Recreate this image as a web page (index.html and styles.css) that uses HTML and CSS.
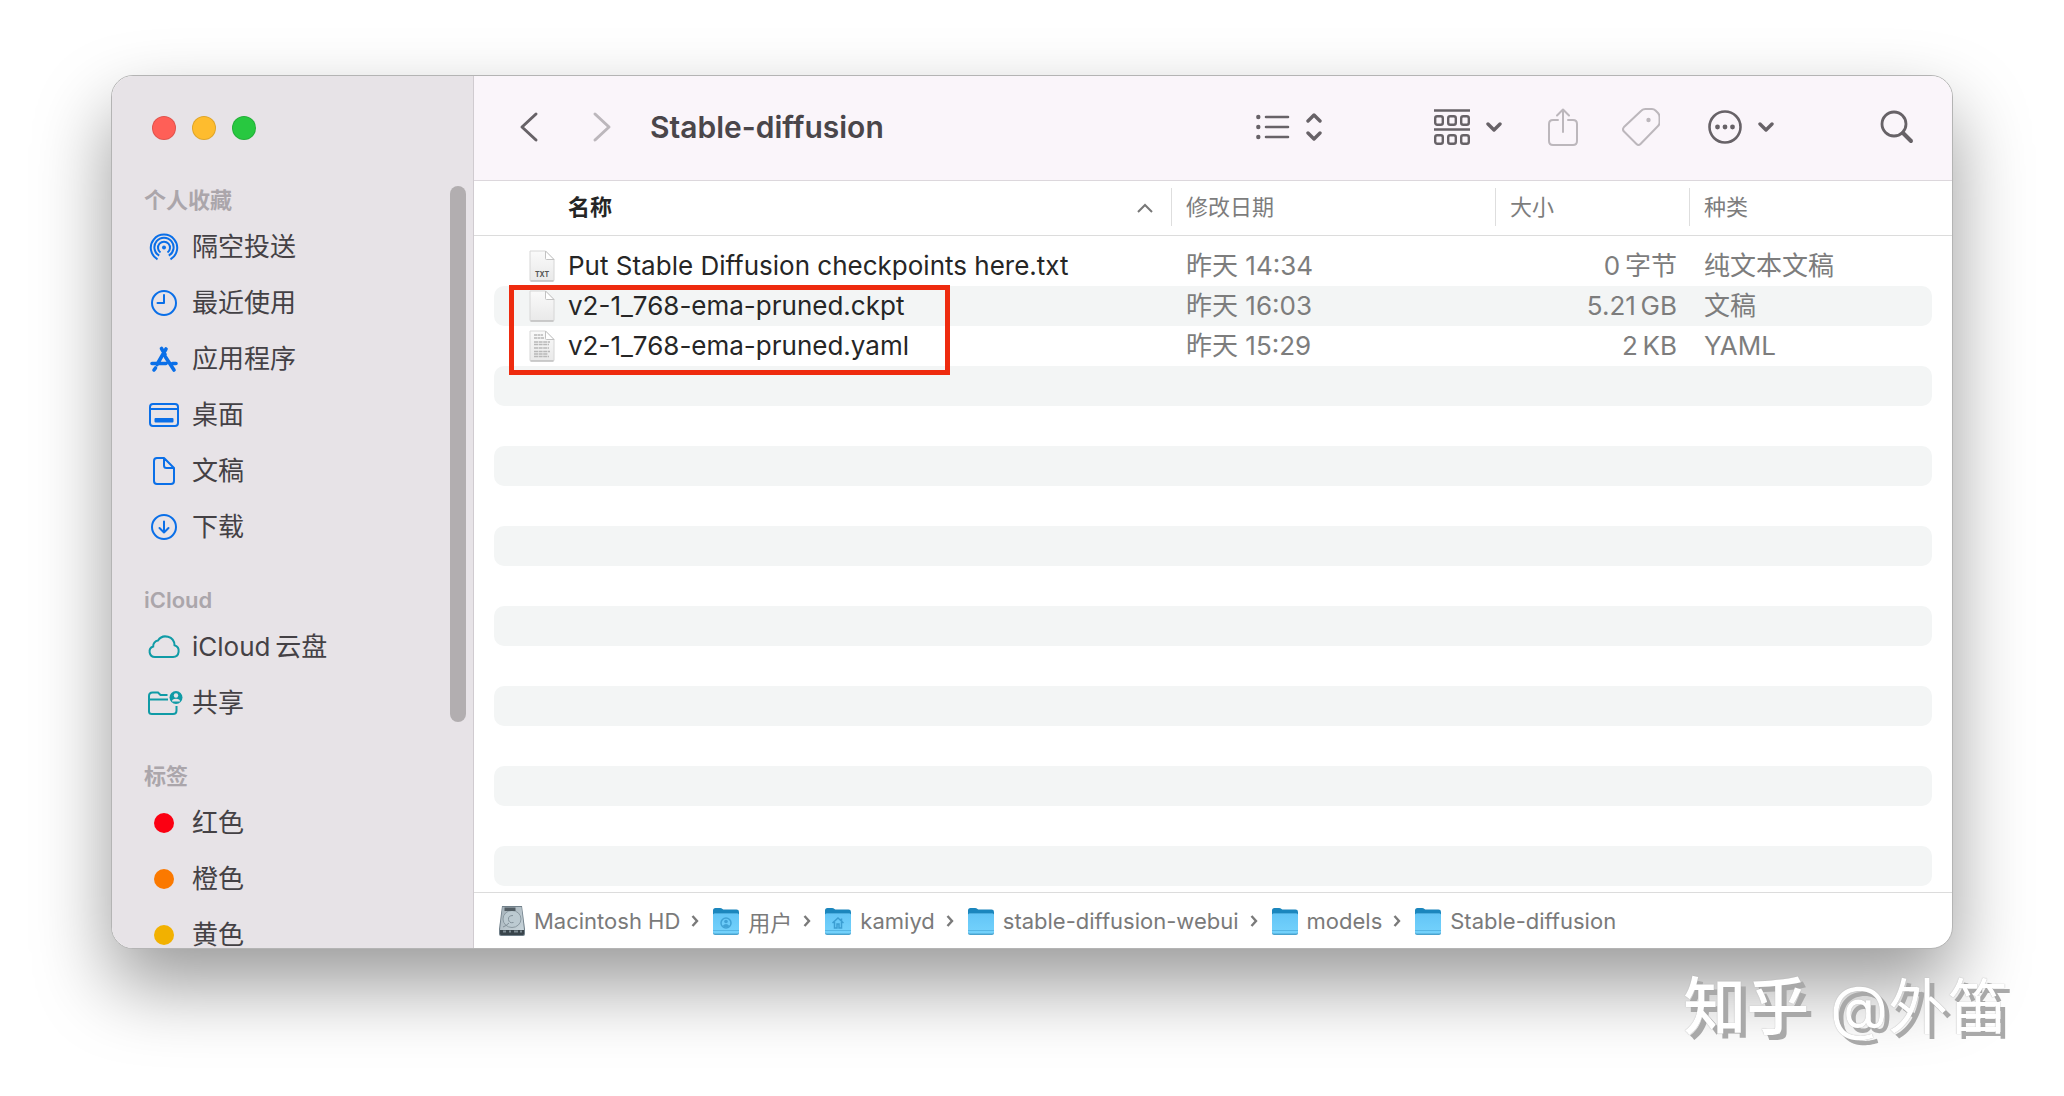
FILE: index.html
```html
<!DOCTYPE html>
<html lang="zh-CN">
<head>
  <meta charset="UTF-8">
  <meta name="viewport" content="width=device-width, initial-scale=1.0">
  <title>Stable-diffusion</title>
  <link rel="stylesheet" href="styles.css">
</head>
<body>

  <!-- shared shapes -->
  <svg class="defs" aria-hidden="true">
    <defs>
      <linearGradient id="paper" x1="0" y1="0" x2="0" y2="1">
        <stop offset="0" stop-color="#fafafa"/>
        <stop offset="1" stop-color="#e9e9e9"/>
      </linearGradient>
      <linearGradient id="blue" x1="0" y1="0" x2="0" y2="1">
        <stop offset="0" stop-color="#63c5f6"/>
        <stop offset="1" stop-color="#74d2fc"/>
      </linearGradient>
      <linearGradient id="metal" x1="0" y1="0" x2="1" y2="1">
        <stop offset="0" stop-color="#a3b0b8"/>
        <stop offset="1" stop-color="#c9d5db"/>
      </linearGradient>
      <symbol id="folder" viewBox="0 0 26 28">
        <path d="M0 3.500Q0 1 2.500 1H7q1.500 0 2.500 1l.8.600H23.500Q26 2.600 26 5v10H0z" fill="#1b86bd"/>
        <path d="M0 8q0-1.500 1.500-1.500h23Q26 6.500 26 8v18q0 2-2 2H2q-2 0-2-2z" fill="#4aa3cf"/>
        <path d="M0 8q0-1.500 1.500-1.500h23Q26 6.500 26 8v17q0 1.500-2 1.500H2q-2 0-2-1.500z" fill="url(#blue)"/>
        <path d="M0 23.500h26" stroke="#56b6e4" stroke-width="1"/>
      </symbol>
      <symbol id="down" viewBox="0 0 16 10">
        <path d="M2 2l6 6 6-6" fill="none" stroke="currentColor" stroke-width="3.400" stroke-linecap="round" stroke-linejoin="round"/>
      </symbol>
      <symbol id="next" viewBox="0 0 8 14">
        <path d="M1.500 2l4.500 5-4.500 5" fill="none" stroke="currentColor" stroke-width="2.400"/>
      </symbol>
      <symbol id="page" viewBox="0 0 26 32">
        <path d="M1 1h15.500L25 9.500V30q0 1-1 1H2q-1 0-1-1z" fill="url(#paper)" stroke="#d6d6d6"/>
        <path d="M1.500 31H24.500" stroke="#b0b0b0"/>
        <path d="M16.500 1v7.500q0 1 1 1H25z" fill="#fff" stroke="#c2c2c2"/>
      </symbol>
    </defs>
  </svg>

  <div class="window">
    <nav class="sidebar">
      <div class="lights">
        <button class="light close" aria-label="关闭"></button>
        <button class="light minimize" aria-label="最小化"></button>
        <button class="light zoom" aria-label="缩放"></button>
      </div>
      <div class="places">
        <h2>个人收藏</h2>
        <ul>
          <li><a href="#"><svg class="icon" viewBox="0 0 32 32"><g fill="none" stroke="currentColor" stroke-width="2"><path d="M9.500 28.300A13.200 13.200 0 1 1 22.500 28.300"/><path d="M11.200 24.600A9.600 9.600 0 1 1 20.800 24.600"/><path d="M12.500 21.500A6 6 0 1 1 19.500 21.500" /></g><circle cx="16" cy="16.500" r="2" fill="currentColor"/></svg>隔空投送</a></li>
          <li><a href="#"><svg class="icon" viewBox="0 0 32 32"><g fill="none" stroke="currentColor" stroke-width="2" stroke-linecap="round" stroke-linejoin="round"><circle cx="16" cy="16" r="12"/><path d="M16 8v8H9.500"/></g></svg>最近使用</a></li>
          <li><a href="#"><svg class="icon" viewBox="0 0 32 32"><g fill="none" stroke="currentColor" stroke-width="3.600" stroke-linecap="round"><path d="M18 6L9 21.500M13.500 5.500l3.500 6M17.500 14l8.500 13M4 20.500h14M24.500 20.500h3.500M7.500 25l-1.500 2"/></g></svg>应用程序</a></li>
          <li><a href="#"><svg class="icon" viewBox="0 0 32 32"><rect x="2" y="5" width="28" height="22" rx="3" fill="none" stroke="currentColor" stroke-width="2"/><path d="M2 10h28" stroke="currentColor" stroke-width="2"/><rect x="6.500" y="19" width="19" height="4.500" rx="1" fill="currentColor"/></svg>桌面</a></li>
          <li><a href="#"><svg class="icon" viewBox="0 0 32 32"><path d="M8.500 3H16l10 10v13q0 3-3 3H9q-3 0-3-3V6q0-3 3-3zM16 3v7.500q0 2.500 2.500 2.500H26" fill="none" stroke="currentColor" stroke-width="2" stroke-linejoin="round"/></svg>文稿</a></li>
          <li><a href="#"><svg class="icon" viewBox="0 0 32 32"><g fill="none" stroke="currentColor" stroke-width="2" stroke-linecap="round" stroke-linejoin="round"><circle cx="16" cy="16" r="12"/><path d="M16 10.500v11M11.500 17l4.500 4.500 4.500-4.500"/></g></svg>下载</a></li>
        </ul>
        <h2>iCloud</h2>
        <ul class="cloud">
          <li><a href="#"><svg class="icon" viewBox="0 0 32 32"><path d="M7 26H25a6 6 0 0 0 1.500-11.700A9 9 0 0 0 10 9.500a5.500 5.500 0 0 0-4.800 6A5.400 5.400 0 0 0 7 26z" fill="none" stroke="currentColor" stroke-width="2"/></svg>iCloud&thinsp;云盘</a></li>
          <li><a href="#"><svg class="icon" viewBox="0 0 32 32"><path d="M19.500 8H12.500L10 5.500H4.500Q1 5.500 1 9v15.500Q1 27 4 27h21q3.500 0 3.500-3.500V19M1 12.500h19" fill="none" stroke="currentColor" stroke-width="2"/><circle cx="28" cy="10.500" r="6.500" fill="currentColor"/><circle cx="28" cy="8.500" r="2.200" fill="#e7e3e7"/><path d="M24 14.500q0-2.700 4-2.700t4 2.700z" fill="#e7e3e7"/></svg>共享</a></li>
        </ul>
        <h2>标签</h2>
        <ul>
          <li><a href="#"><span class="dot red"></span>红色</a></li>
          <li><a href="#"><span class="dot orange"></span>橙色</a></li>
          <li><a href="#"><span class="dot yellow"></span>黄色</a></li>
        </ul>
      </div>
      <div class="scrollbar"></div>
    </nav>

    <main class="content">
      <header class="toolbar">
        <button class="tool" aria-label="后退"><svg width="20" height="32" viewBox="0 0 20 32"><path d="M17 3L3 16l14 13" fill="none" stroke="currentColor" stroke-width="3" stroke-linecap="round" stroke-linejoin="round"/></svg></button>
        <button class="tool forward" aria-label="前进" disabled><svg width="20" height="32" viewBox="0 0 20 32"><path d="M3 3l14 13L3 29" fill="none" stroke="currentColor" stroke-width="3" stroke-linecap="round" stroke-linejoin="round"/></svg></button>
        <h1>Stable-diffusion</h1>
        <div class="tools">
          <button class="tool view" aria-label="显示方式">
            <svg width="34" height="28" viewBox="0 0 34 28"><g stroke="currentColor" stroke-width="2.600" stroke-linecap="round"><path d="M10 4h22M10 14h22M10 24h22"/></g><g fill="currentColor"><circle cx="2.300" cy="4" r="2.200"/><circle cx="2.300" cy="14" r="2.200"/><circle cx="2.300" cy="24" r="2.200"/></g></svg>
            <svg width="16" height="28" viewBox="0 0 16 28"><path d="M2 8l6-6 6 6M2 20l6 6 6-6" fill="none" stroke="currentColor" stroke-width="3.400" stroke-linecap="round" stroke-linejoin="round"/></svg>
          </button>
          <button class="tool group" aria-label="分组">
            <svg width="36" height="36" viewBox="0 0 36 36"><g fill="none" stroke="currentColor" stroke-width="2.400"><path d="M0 1.500h36M0 20.500h36"/><rect x="1.200" y="7.200" width="7.600" height="8.600" rx="2"/><rect x="14.200" y="7.200" width="7.600" height="8.600" rx="2"/><rect x="27.200" y="7.200" width="7.600" height="8.600" rx="2"/><rect x="1.200" y="26.200" width="7.600" height="8.600" rx="2"/><rect x="14.200" y="26.200" width="7.600" height="8.600" rx="2"/><rect x="27.200" y="26.200" width="7.600" height="8.600" rx="2"/></g></svg>
            <svg width="16" height="10"><use href="#down"/></svg>
          </button>
          <button class="tool share" aria-label="共享" disabled><svg width="30" height="40" viewBox="0 0 30 40"><path d="M10 13H5q-4 0-4 4v17q0 4 4 4h20q4 0 4-4V17q0-4-4-4h-5M15 25V3M9 8.500L15 2.500l6 6" fill="none" stroke="currentColor" stroke-width="2" stroke-linecap="round" stroke-linejoin="round"/></svg></button>
          <button class="tool tag" aria-label="标签" disabled><svg width="38" height="38" viewBox="0 0 38 38"><path d="M19.500 2.500Q21 1 23.500 1H30q2 0 3.500 1.500L36 5q1.500 1.500 1.500 4v5.500q0 2-1.500 3.500L18.500 36q-2 2-4 0L2 23.500q-2-2 0-4.500z" fill="none" stroke="currentColor" stroke-width="2"/><circle cx="26.500" cy="12" r="2.200" fill="currentColor"/></svg></button>
          <button class="tool more" aria-label="更多">
            <svg width="34" height="34" viewBox="0 0 34 34"><circle cx="17" cy="17" r="15.500" fill="none" stroke="currentColor" stroke-width="2.600"/><g fill="currentColor"><circle cx="9.500" cy="17" r="2.400"/><circle cx="17" cy="17" r="2.400"/><circle cx="24.500" cy="17" r="2.400"/></g></svg>
            <svg width="16" height="10"><use href="#down"/></svg>
          </button>
          <button class="tool search" aria-label="搜索"><svg width="34" height="34" viewBox="0 0 34 34"><circle cx="14" cy="14" r="12" fill="none" stroke="currentColor" stroke-width="2.800"/><path d="M23 23l8 8" stroke="currentColor" stroke-width="4" stroke-linecap="round"/></svg></button>
        </div>
      </header>

      <div class="list">
        <table>
          <thead>
            <tr>
              <th class="name"><div class="sort">名称<svg width="16" height="10" viewBox="0 0 16 10"><path d="M1 9l7-7 7 7" fill="none" stroke="#777" stroke-width="2"/></svg></div></th>
              <th class="date">修改日期</th>
              <th class="size">大小</th>
              <th class="kind">种类</th>
            </tr>
          </thead>
          <tbody>
            <tr>
              <td><div class="file"><svg width="26" height="32" viewBox="0 0 26 32"><use href="#page"/><text x="13" y="27" class="ext">TXT</text></svg>Put Stable Diffusion checkpoints here.txt</div></td>
              <td>昨天 14:34</td>
              <td class="bytes">0&thinsp;字节</td>
              <td>纯文本文稿</td>
            </tr>
            <tr>
              <td><div class="file"><svg width="26" height="32" viewBox="0 0 26 32"><use href="#page"/></svg>v2-1_768-ema-pruned.ckpt</div></td>
              <td>昨天 16:03</td>
              <td class="bytes">5.21&thinsp;GB</td>
              <td>文稿</td>
            </tr>
            <tr>
              <td><div class="file"><svg width="26" height="32" viewBox="0 0 26 32"><use href="#page"/><g stroke="#b8b8b8" stroke-width="1.500"><path d="M5 5h9M5 8h10" stroke-dasharray="3 .5"/><path d="M5 12h16M5 14.500h15M5 18h15M5 21.500h16M5 24h14M5 26.500h15" stroke-dasharray="4 .6"/></g></svg>v2-1_768-ema-pruned.yaml</div></td>
              <td>昨天 15:29</td>
              <td class="bytes">2&thinsp;KB</td>
              <td>YAML</td>
            </tr>
            <tr><td colspan="4"></td></tr>
            <tr><td colspan="4"></td></tr>
            <tr><td colspan="4"></td></tr>
            <tr><td colspan="4"></td></tr>
            <tr><td colspan="4"></td></tr>
            <tr><td colspan="4"></td></tr>
            <tr><td colspan="4"></td></tr>
            <tr><td colspan="4"></td></tr>
            <tr><td colspan="4"></td></tr>
            <tr><td colspan="4"></td></tr>
            <tr><td colspan="4"></td></tr>
            <tr><td colspan="4"></td></tr>
            <tr><td colspan="4"></td></tr>
          </tbody>
        </table>
        <div class="highlight"></div>
      </div>

      <footer class="pathbar">
        <a href="#"><svg width="26" height="30" viewBox="0 0 26 30"><path d="M3 0h20l3 23v5q0 2-2 2H2q-2 0-2-2v-5z" fill="#71808a"/><path d="M3.500 1h19L25 24H1z" fill="url(#metal)"/><ellipse cx="13" cy="13" rx="9" ry="8.500" fill="#bccad1" stroke="#8c9aa2"/><path d="M14 9.500q-5 0-4.500 4t5 3M10 17q-3 3-6 4" fill="none" stroke="#83919a"/><path d="M5.500 1.500h11v3.500h-11z" fill="#525d64"/><path d="M1 24h24v3.500q0 1.500-1.500 1.500h-21Q1 29 1 27.500z" fill="#39444b"/><path d="M4 25.500h3M10 25.500h2M15 25.500h4M21 25.500h2" stroke="#7d8a92" stroke-width="2"/></svg>Macintosh HD</a>
        <svg class="next" width="8" height="14"><use href="#next"/></svg>
        <a href="#"><svg width="26" height="28" viewBox="0 0 26 28"><use href="#folder"/><g opacity=".7"><circle cx="13" cy="16" r="5" fill="none" stroke="#2f92c8" stroke-width="1.500"/><circle cx="13" cy="14.500" r="1.800" fill="#2f92c8"/><path d="M9.500 19q3.500-4 7 0-3.500 3-7 0z" fill="#2f92c8"/></g></svg>用户</a>
        <svg class="next" width="8" height="14"><use href="#next"/></svg>
        <a href="#"><svg width="26" height="28" viewBox="0 0 26 28"><use href="#folder"/><path d="M7.500 16L13 11l5.500 5M16.500 11.500v3M9.500 15v6H12v-4h2v4h2.500v-6" fill="none" stroke="#2f92c8" stroke-width="1.500" opacity=".8"/></svg>kamiyd</a>
        <svg class="next" width="8" height="14"><use href="#next"/></svg>
        <a href="#"><svg width="26" height="28"><use href="#folder"/></svg>stable-diffusion-webui</a>
        <svg class="next" width="8" height="14"><use href="#next"/></svg>
        <a href="#"><svg width="26" height="28"><use href="#folder"/></svg>models</a>
        <svg class="next" width="8" height="14"><use href="#next"/></svg>
        <a href="#"><svg width="26" height="28"><use href="#folder"/></svg>Stable-diffusion</a>
      </footer>
    </main>
  </div>

  <div class="watermark"><b>知乎</b> @外笛</div>

</body>
</html>
```

FILE: styles.css
```css
* {
  box-sizing: border-box;
}
body {
  margin: 0;
  height: 100vh;
  padding: 75px 111px 147px;
  background: #fff;
  font-family: Inter, "Noto Sans CJK SC", sans-serif;
  font-size: 26px;
  color: #262626;
  overflow: hidden;
}
h1, h2, ul {
  margin: 0;
  padding: 0;
}
a {
  color: inherit;
  text-decoration: none;
}
button {
  border: none;
  padding: 0;
  background: none;
}
svg {
  flex: none;
}
.defs {
  position: absolute;
  width: 0;
  height: 0;
}
.window {
  display: flex;
  height: 100%;
  border: 1px solid #b4b4b4;
  border-radius: 22px;
  overflow: hidden;
  background: #fff;
  box-shadow: 0 36px 76px rgba(0, 0, 0, 0.4);
}

/* sidebar */
.sidebar {
  position: relative;
  display: flex;
  flex-direction: column;
  flex: none;
  width: 362px;
  background: #e7e3e7;
  border-right: 1px solid #d0cbd0;
}
.lights {
  display: flex;
  align-items: center;
  gap: 16px;
  height: 105px;
  padding: 0 0 2px 40px;
  flex: none;
}
.light {
  width: 24px;
  height: 24px;
  border-radius: 50%;
  border: 1px solid rgba(0, 0, 0, 0.12);
}
.close {
  background: #ff5f57;
}
.minimize {
  background: #febc2e;
}
.zoom {
  background: #28c840;
}
.places {
  flex: 1;
  min-height: 0;
  overflow: hidden;
}
.places h2 {
  height: 38px;
  line-height: 38px;
  padding-left: 32px;
  font-size: 22px;
  font-weight: 600;
  color: #aba6ab;
}
.places ul {
  list-style: none;
  margin-bottom: 26px;
}
.places li a {
  display: flex;
  align-items: center;
  gap: 12px;
  height: 56px;
  padding: 0 0 5px 36px;
  color: #444145;
}
.icon {
  width: 32px;
  height: 32px;
  margin-top: 4px;
  overflow: visible;
  color: #0a6fe8;
}
.cloud .icon {
  color: #109ba6;
}
.dot {
  width: 20px;
  height: 20px;
  margin: 4px 6px 0;
  border-radius: 50%;
}
.red {
  background: #fb0012;
}
.orange {
  background: #fb7900;
}
.yellow {
  background: #f2b100;
}
.scrollbar {
  position: absolute;
  top: 110px;
  right: 7px;
  width: 16px;
  height: 536px;
  border-radius: 8px;
  background: #b2aeb0;
}

/* toolbar */
.content {
  display: flex;
  flex-direction: column;
  flex: 1;
  min-width: 0;
}
.toolbar {
  display: flex;
  align-items: center;
  flex: none;
  height: 105px;
  padding: 0 38px 2px 45px;
  background: #faf5fa;
  border-bottom: 1px solid #dcd7dc;
}
.tool {
  display: flex;
  align-items: center;
  gap: 16px;
  color: #676267;
}
.tool:disabled {
  color: #bcb7bc;
}
.forward {
  margin-left: 53px;
}
.toolbar h1 {
  margin-left: 38px;
  font-size: 30px;
  font-weight: 600;
  color: #4a464a;
}
.tools {
  display: flex;
  align-items: center;
  margin-left: auto;
}
.group {
  margin-left: 112px;
}
.share {
  margin-left: 46px;
}
.tag {
  margin-left: 44px;
}
.more {
  margin-left: 48px;
}
.search {
  margin-left: 106px;
}

/* file list */
.list {
  position: relative;
  flex: 1;
  min-height: 0;
  padding: 0 20px;
  background: linear-gradient(#dcdcdc, #dcdcdc) 0 54px / 100% 1px no-repeat;
}
table {
  width: 100%;
  table-layout: fixed;
  border-collapse: separate;
  border-spacing: 0;
}
th {
  height: 65px;
  padding: 2px 0 20px;
  font-size: 22px;
  font-weight: 400;
  text-align: left;
  color: #7d7d7d;
  background: linear-gradient(#dedede, #dedede) 0 7px / 1px 38px no-repeat;
}
th.name {
  padding-left: 74px;
  font-weight: 700;
  color: #262626;
  background: none;
}
.date, .size, .kind {
  padding-left: 15px;
}
.date {
  width: 324px;
}
.size {
  width: 194px;
}
.kind {
  width: 243px;
}
.sort {
  display: flex;
  align-items: center;
  justify-content: space-between;
  padding-right: 18px;
}
.sort svg {
  margin-top: 6px;
}
td {
  height: 40px;
  padding: 0 0 0 15px;
  line-height: 40px;
  color: #7d7d7d;
  white-space: nowrap;
}
tr:nth-child(even) td {
  background: #f3f5f5;
}
td:first-child {
  border-radius: 10px 0 0 10px;
}
td:last-child {
  border-radius: 0 10px 10px 0;
}
td[colspan] {
  border-radius: 10px;
}
.file {
  display: flex;
  align-items: center;
  gap: 13px;
  padding-left: 20px;
  color: #262626;
}
.ext {
  font-size: 7px;
  font-weight: 700;
  text-anchor: middle;
  fill: #555;
}
td.bytes {
  padding-right: 12px;
  text-align: right;
}
.highlight {
  position: absolute;
  top: 104px;
  left: 35px;
  width: 441px;
  height: 90px;
  border: 5px solid #ee2b0f;
}

/* path bar */
.pathbar {
  display: flex;
  align-items: center;
  flex: none;
  height: 56px;
  padding-left: 25px;
  border-top: 1px solid #dcdcdc;
  font-size: 22px;
  color: #7a7a7a;
}
.pathbar a {
  display: flex;
  align-items: center;
  gap: 9px;
}
.next {
  margin: 0 14px 0 11px;
}

.watermark {
  position: absolute;
  right: 56px;
  bottom: 47px;
  font-size: 60px;
  line-height: 84px;
  color: #fff;
  text-shadow: 0 0 1px #999, 5px 5px 0 #a9a9a9;
}
.watermark b {
  margin-right: 4px;
  font-size: 63px;
  font-weight: 500;
}
```
